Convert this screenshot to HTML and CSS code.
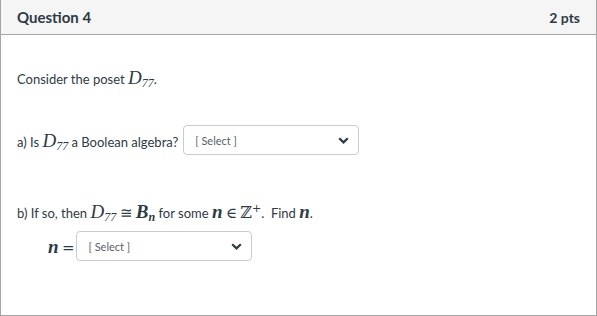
FILE: index.html
```html
<!DOCTYPE html>
<html lang="en">
<head>
  <meta charset="UTF-8">
  <title>Question 4</title>
  <link rel="stylesheet" href="styles.css">
</head>
<body>

  <div class="question">
    <div class="question-header">
      <h2>Question 4</h2>
      <span class="pts">2 pts</span>
    </div>

    <div class="question-body">
      <p class="intro">Consider the poset <span class="m">D<sub>77</sub></span>.</p>

      <div class="row row-a">
        <span>a) Is <span class="m">D<sub>77</sub></span> a Boolean algebra?</span>
        <div class="select">
          <span>[ Select ]</span>
          <svg width="11" height="7" viewBox="0 0 11 7"><path d="M1.2 1.2 L5.5 5.4 L9.8 1.2" fill="none" stroke="#2d3b45" stroke-width="2.2"/></svg>
        </div>
      </div>

      <p class="part-b">b) If so, then <span class="m">D<sub>77</sub></span> <span class="rel">&#8773;</span> <span class="m b">B<sub>n</sub></span> for some <span class="m b">n</span> <span class="rel">&#8712;</span> <span class="bb">&#8484;<sup>+</sup></span>.&nbsp; Find <span class="m b">n</span>.</p>

      <div class="row row-n">
        <span class="n-label"><span class="m b">n</span> <span class="rel">=</span></span>
        <div class="select">
          <span>[ Select ]</span>
          <svg width="11" height="7" viewBox="0 0 11 7"><path d="M1.2 1.2 L5.5 5.4 L9.8 1.2" fill="none" stroke="#2d3b45" stroke-width="2.2"/></svg>
        </div>
      </div>
    </div>
  </div>

</body>
</html>
```

FILE: styles.css
```css
body { margin: 0; font-family: Lato, "Liberation Sans", sans-serif; color: #2d3b45; font-size: 13px; }
.question { width: 595px; height: 315px; border: 1px solid #a5a5a5; border-top: none; background: #fff; }
.question-header { height: 34px; background: #f5f5f5; border-bottom: 1px solid #a5a5a5; display: flex; align-items: center; justify-content: space-between; padding: 0 16px 0 16px; }
.question-header h2 { margin: 0; font-size: 15px; font-weight: bold; }
.pts { font-size: 14px; font-weight: bold; }
.question-body { padding: 0 16px; }
.intro { margin: 33px 0 0; height: 18px; line-height: 18px; }
.m { font-family: "Liberation Serif", serif; font-style: italic; font-size: 19px; line-height: 1; }
.m.b { font-weight: bold; }
.m sub { font-size: 12px; vertical-align: -3px; line-height: 0; }
.rel { font-family: "DejaVu Serif", serif; font-size: 15px; line-height: 1; }
.bb { font-family: "DejaVu Serif", serif; font-size: 16px; line-height: 1; }
.bb sup { font-size: 11px; line-height: 0; }
.row { display: flex; align-items: center; gap: 10px; }
.row-a { margin-top: 39px; gap: 5px; }
.part-b { margin: 47px 0 0; height: 18px; line-height: 18px; }
.row-n { margin-top: 11px; padding-left: 31px; gap: 2px; }
.select { height: 28px; border: 1px solid #c7cdd1; border-radius: 4px; display: flex; align-items: center; justify-content: space-between; padding: 0 9px 0 11px; box-sizing: content-box; background: #fff; }
.select span { font-size: 11px; color: #56626b; }
.select svg { flex: none; }
.row-a .select { width: 154px; }
.row-n .select { width: 154px; }
```
